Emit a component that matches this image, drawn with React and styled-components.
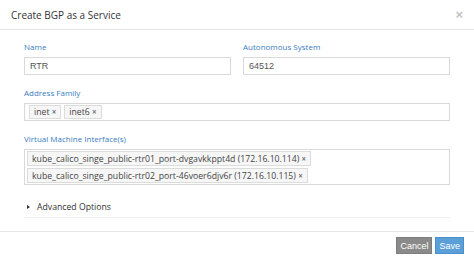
import React from 'react'
import styled, { createGlobalStyle } from 'styled-components'

const addressFamilies = ['inet', 'inet6']
const interfaces = [
  'kube_calico_singe_public-rtr01_port-dvgavkkppt4d (172.16.10.114)',
  'kube_calico_singe_public-rtr02_port-46voer6djv6r (172.16.10.115)',
]

export default function App() {
  return (
    <>
      <GlobalStyle />
      <Modal>
        <Header>
          <Title>Create BGP as a Service</Title>
          <Close>×</Close>
        </Header>
        <Body>
          <Row>
            <Field>
              <Label>Name</Label>
              <Input>RTR</Input>
            </Field>
            <Field>
              <Label>Autonomous System</Label>
              <Input>64512</Input>
            </Field>
          </Row>
          <Field>
            <Label>Address Family</Label>
            <TagBox>
              {addressFamilies.map(f => (
                <Tag key={f}>
                  {f} <TagX>×</TagX>
                </Tag>
              ))}
            </TagBox>
          </Field>
          <Field>
            <Label>Virtual Machine Interface(s)</Label>
            <TagBox $stacked>
              {interfaces.map(i => (
                <Tag key={i} $tall>
                  {i} <TagX>×</TagX>
                </Tag>
              ))}
            </TagBox>
          </Field>
          <Advanced>
            <Caret />
            Advanced Options
          </Advanced>
        </Body>
        <Footer>
          <Button $variant="cancel">Cancel</Button>
          <Button $variant="save">Save</Button>
        </Footer>
      </Modal>
    </>
  )
}

const GlobalStyle = createGlobalStyle`
  body {
    margin: 0;
    background: #fff;
    font-family: "Open Sans", sans-serif;
  }
`
const Modal = styled.div`
  width: 474px;
  height: 261px;
  display: flex;
  flex-direction: column;
  background: #fff;
`
const Header = styled.div`
  height: 29px;
  border-bottom: 1px solid #e5e5e5;
  display: flex;
  align-items: center;
  justify-content: space-between;
  padding: 0 11px 0 11px;
`
const Title = styled.div`
  font-size: 10px;
  color: #333;
  padding-top: 1px;
`
const Close = styled.div`
  font-family: "Liberation Sans", sans-serif;
  font-size: 13px;
  font-weight: bold;
  color: #c4c4c4;
  line-height: 1;
`
const Body = styled.div`
  padding: 11px 24px 0 24px;
  display: flex;
  flex-direction: column;
  gap: 12px;
`
const Row = styled.div`
  display: grid;
  grid-template-columns: 1fr 1fr;
  gap: 12px;
`
const Field = styled.div`
  display: flex;
  flex-direction: column;
`
const Label = styled.div`
  font-size: 8px;
  line-height: 12px;
  color: #3a7cbf;
  margin-bottom: 4px;
`
const Input = styled.div`
  height: 16px;
  border: 1px solid #d9d9d9;
  padding: 0 5px;
  font-family: "Liberation Sans", sans-serif;
  font-size: 9px;
  line-height: 16px;
  color: #555;
`
const TagBox = styled.div`
  border: 1px solid #d9d9d9;
  padding: ${({ $stacked }) => ($stacked ? '1px 2px' : '1px 4px')};
  display: flex;
  flex-direction: ${({ $stacked }) => ($stacked ? 'column' : 'row')};
  align-items: flex-start;
  gap: ${({ $stacked }) => ($stacked ? '2px' : '3px')};
`
const Tag = styled.div`
  height: ${({ $tall }) => ($tall ? '13px' : '12px')};
  border: 1px solid #dcdcdc;
  background: #f6f6f6;
  padding: 0 4px;
  font-size: 8.7px;
  line-height: ${({ $tall }) => ($tall ? '13px' : '12px')};
  color: #444;
  white-space: nowrap;
`
const TagX = styled.span`
  font-size: 8px;
  font-weight: bold;
  color: #777;
`
const Advanced = styled.div`
  height: 20px;
  border-bottom: 1px solid #eee;
  display: flex;
  align-items: center;
  gap: 7px;
  padding-left: 3px;
  font-size: 8.7px;
  color: #333;
`
const Caret = styled.span`
  width: 0;
  height: 0;
  border-top: 2.5px solid transparent;
  border-bottom: 2.5px solid transparent;
  border-left: 3px solid #333;
`
const Footer = styled.div`
  margin-top: 13px;
  border-top: 1px solid #e5e5e5;
  padding: 5px 10px 0 0;
  display: flex;
  justify-content: flex-end;
  gap: 3px;
`
const Button = styled.div`
  height: 15px;
  padding: 0 3px;
  display: flex;
  align-items: center;
  font-family: "Liberation Sans", sans-serif;
  font-size: 9px;
  color: #fff;
  background: ${({ $variant }) => ($variant === 'save' ? '#5b9fd9' : '#8a8a8a')};
  border: 1px solid ${({ $variant }) => ($variant === 'save' ? '#4a90cc' : '#7d7d7d')};
`
